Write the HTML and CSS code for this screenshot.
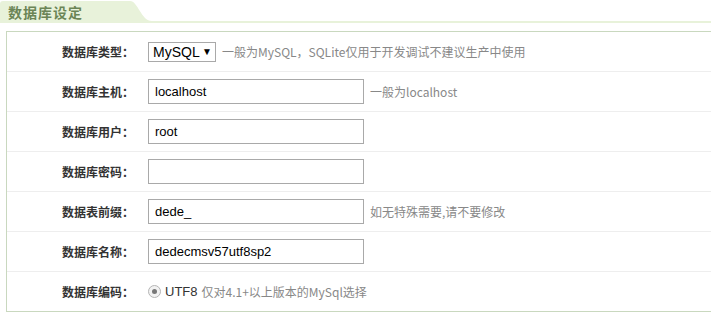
FILE: index.html
```html
<!DOCTYPE html>
<html lang="zh-CN">
<head>
  <meta charset="UTF-8">
  <title>数据库设定</title>
  <link rel="stylesheet" href="styles.css">
</head>
<body>

  <!-- section header tab -->
  <div class="sec-head">
    <div class="sec-tab"><h3>数据库设定</h3></div>
    <svg class="sec-curve" width="22" height="22" viewBox="0 0 22 22">
      <path d="M0 0 C8 0 11 20 22 20 L22 22 L0 22 Z" fill="#e8f2da"/>
    </svg>
    <div class="sec-line"></div>
  </div>

  <div class="form-box">
    <div class="row">
      <label class="lbl">数据库类型<span class="colon">：</span></label>
      <div class="field">
        <span class="select-wrap">
          <select>
            <option>MySQL</option>
            <option>SQLite</option>
          </select>
        </span>
        <span class="tip">一般为MySQL，SQLite仅用于开发调试不建议生产中使用</span>
      </div>
    </div>
    <div class="row">
      <label class="lbl">数据库主机<span class="colon">：</span></label>
      <div class="field">
        <input type="text" class="txt" value="localhost">
        <span class="tip">一般为localhost</span>
      </div>
    </div>
    <div class="row">
      <label class="lbl">数据库用户<span class="colon">：</span></label>
      <div class="field">
        <input type="text" class="txt" value="root">
      </div>
    </div>
    <div class="row">
      <label class="lbl">数据库密码<span class="colon">：</span></label>
      <div class="field">
        <input type="text" class="txt" value="">
      </div>
    </div>
    <div class="row">
      <label class="lbl">数据表前缀<span class="colon">：</span></label>
      <div class="field">
        <input type="text" class="txt" value="dede_">
        <span class="tip">如无特殊需要,请不要修改</span>
      </div>
    </div>
    <div class="row">
      <label class="lbl">数据库名称<span class="colon">：</span></label>
      <div class="field">
        <input type="text" class="txt" value="dedecmsv57utf8sp2">
      </div>
    </div>
    <div class="row last">
      <label class="lbl">数据库编码<span class="colon">：</span></label>
      <div class="field">
        <span class="radio"><span class="dot"></span></span>
        <span class="utf">UTF8</span>
        <span class="tip tip-near">仅对4.1+以上版本的MySql选择</span>
      </div>
    </div>
  </div>

</body>
</html>
```

FILE: styles.css
```css
body {
  margin: 0;
  padding: 0;
  background: #fff;
  font-family: "Liberation Sans", "Noto Sans CJK SC", sans-serif;
  font-size: 12px;
  color: #333;
}

.sec-head {
  display: flex;
  align-items: flex-end;
  height: 23px;
}

.sec-tab {
  background: #e8f2da;
  width: 130px;
  height: 22px;
  border-top-left-radius: 3px;
  display: flex;
  align-items: center;
}

.sec-tab h3 {
  margin: 0 0 0 8px;
  font-family: "Noto Sans CJK SC", sans-serif;
  font-size: 14px;
  font-weight: bold;
  color: #6b8556;
  letter-spacing: 1px;
  line-height: 22px;
}

.sec-curve {
  display: block;
  flex: none;
}

.sec-line {
  flex: 1;
  height: 2px;
  background: #e8f2da;
}

.form-box {
  margin: 8px 0 0 6px;
  border: 1px solid #c9d8bf;
  border-right: none;
}

.row {
  display: flex;
  align-items: center;
  height: 39px;
  border-bottom: 1px solid #eeeeee;
}

.row.last {
  border-bottom: none;
}

.lbl {
  width: 127px;
  text-align: right;
  font-family: "Noto Sans CJK SC", sans-serif;
  font-weight: bold;
  font-size: 12px;
  color: #333;
  flex: none;
}

.lbl .colon {
  font-family: "Noto Sans CJK TC", sans-serif;
}

.field {
  display: flex;
  align-items: center;
  margin-left: 14px;
}

.txt {
  box-sizing: border-box;
  width: 216px;
  height: 25px;
  border: 1px solid #a9a9a9;
  padding: 0 6px;
  font-family: "Liberation Sans", sans-serif;
  font-size: 13px;
  color: #000;
  outline: none;
}

.select-wrap {
  position: relative;
  display: inline-block;
}

.select-wrap select {
  appearance: none;
  -webkit-appearance: none;
  box-sizing: border-box;
  width: 68px;
  height: 20px;
  border: 1px solid #a9a9a9;
  border-radius: 0;
  background: #fff;
  padding: 0 0 0 4px;
  font-family: "Liberation Sans", sans-serif;
  font-size: 14px;
  color: #000;
  outline: none;
}

.select-wrap::after {
  content: "\25BC";
  position: absolute;
  right: 4px;
  top: 4px;
  font-size: 10px;
  color: #000;
  pointer-events: none;
}

.tip {
  margin-left: 6px;
  font-family: "Noto Sans CJK SC", sans-serif;
  font-size: 12px;
  color: #888;
}

.tip-near {
  margin-left: 4px;
}

.radio {
  box-sizing: border-box;
  width: 13px;
  height: 13px;
  border-radius: 50%;
  border: 1px solid #b5b5b5;
  background: #f2f2f2;
  display: flex;
  align-items: center;
  justify-content: center;
}

.radio .dot {
  width: 5px;
  height: 5px;
  border-radius: 50%;
  background: #777;
}

.utf {
  margin-left: 4px;
  font-family: "Liberation Sans", sans-serif;
  font-size: 13px;
  color: #333;
}
```
